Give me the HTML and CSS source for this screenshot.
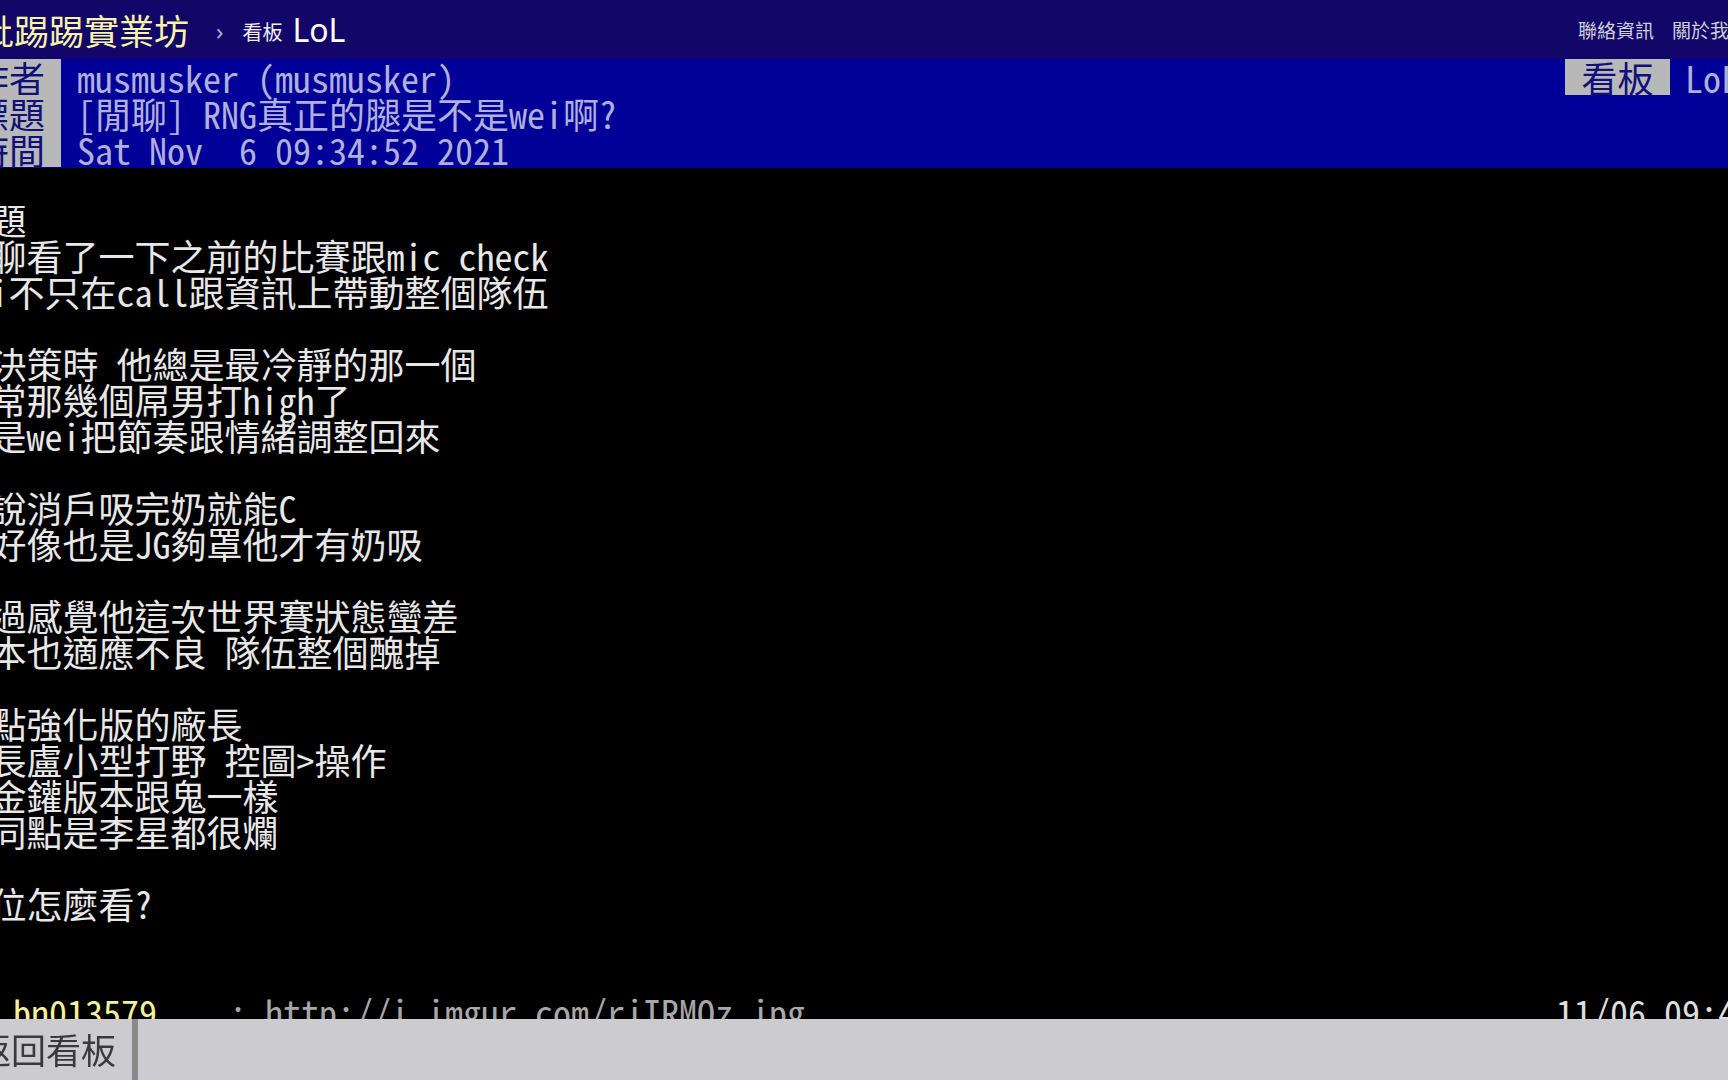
FILE: index.html
```html
<!DOCTYPE html>
<html lang="zh-Hant">
<head>
<meta charset="utf-8">
<title>[閒聊] RNG真正的腿是不是wei啊? - 看板 LoL - 批踢踢實業坊</title>
<link rel="stylesheet" href="styles.css">
</head>
<body>
<div class="topbar">
  <div class="crumbs">
    <span class="logo">批踢踢實業坊</span>
    <span class="sep">›</span>
    <span class="board-label">看板</span>
    <span class="board">LoL</span>
  </div>
  <div class="links">
    <span class="link">聯絡資訊</span>
    <span class="link">關於我們</span>
  </div>
</div>
<div class="main">
  <div class="meta">
    <div class="meta-left">
      <div class="metaline"><span class="tag">作者</span><span class="val">musmusker (musmusker)</span></div>
      <div class="metaline"><span class="tag">標題</span><span class="val">[閒聊] RNG真正的腿是不是wei啊?</span></div>
      <div class="metaline"><span class="tag">時間</span><span class="val">Sat Nov  6 09:34:52 2021</span></div>
    </div>
    <div class="metaline meta-right"><span class="tag tag-right">看板</span><span class="val val-right">LoL</span></div>
  </div>
  <div class="content">如題
無聊看了一下之前的比賽跟mic check
Wei不只在call跟資訊上帶動整個隊伍

在決策時 他總是最冷靜的那一個
平常那幾個屌男打high了
都是wei把節奏跟情緒調整回來

都說消戶吸完奶就能C
但好像也是JG夠罩他才有奶吸

不過感覺他這次世界賽狀態蠻差
版本也適應不良 隊伍整個醜掉

有點強化版的廠長
廠長盧小型打野 控圖>操作
但金鑵版本跟鬼一樣
共同點是李星都很爛

各位怎麼看?</div>
  <div class="spacer"></div>
  <div class="push"><span class="push-tag">推 </span><span class="push-userid">bn013579</span><span class="push-content">: http://i.imgur.com/rjIRMOz.jpg</span><span class="push-time">11/06 09:41</span></div>
</div>
<div class="bottombar">
  <div class="back">返回看板</div>
</div>
</body>
</html>
```

FILE: styles.css
```css
html, body {
  margin: 0;
  padding: 0;
  overflow: hidden;
  background: #000;
  width: 1728px;
  height: 1080px;
}

body {
  font-family: "Noto Sans Mono CJK TC", "Noto Sans CJK TC", "DejaVu Sans Mono", monospace;
  color: #e8e8e8;
}

.topbar {
  height: 59px;
  background: #120668;
  display: flex;
  align-items: center;
  justify-content: space-between;
  font-family: "Noto Sans", "Noto Sans CJK TC", sans-serif;
}

.crumbs {
  display: flex;
  align-items: center;
  margin-left: -21px;
}

.logo {
  font-family: "Noto Sans CJK TC", sans-serif;
  font-size: 35px;
  color: #f8f4a6;
  line-height: 1;
}

.sep {
  font-size: 24px;
  color: #a8a8d0;
  margin-left: 27px;
  line-height: 1;
  margin-top: 2px;
}

.board-label {
  font-family: "Noto Sans CJK TC", sans-serif;
  font-size: 20px;
  color: #eeeeee;
  margin-left: 19px;
  margin-top: 4px;
}

.board {
  font-size: 32px;
  color: #ffffff;
  margin-left: 10px;
  line-height: 1;
}

.links {
  display: flex;
  gap: 18px;
  margin-right: -20px;
}

.link {
  font-family: "Noto Sans CJK TC", sans-serif;
  font-size: 19px;
  color: #cfcfd8;
}

.main {
  font-size: 36px;
  line-height: 36px;
}

.meta {
  background: #000099;
  display: flex;
  justify-content: space-between;
  align-items: flex-start;
  margin-right: -11px;
  padding-bottom: 1px;
}

.metaline {
  display: flex;
  height: 36px;
  white-space: pre;
}

.tag {
  background: #b8b8b8;
  color: #10107a;
  width: 104px;
  margin-left: -43px;
  text-align: center;
}

.val {
  color: #b0b0da;
  margin-left: 16px;
}

.tag-right {
  width: 105px;
  margin-left: 0;
}

.val-right {
  margin-left: 15px;
}

.content {
  white-space: pre;
  margin-left: -45.5px;
  padding-top: 33px;
}

.spacer {
  height: 72px;
}

.push {
  display: flex;
  white-space: pre;
  margin-left: -59px;
  margin-right: -26px;
}

.push-tag {
  min-width: 72px;
  color: #ffffff;
}

.push-userid {
  min-width: 216px;
  color: #f5f19a;
}

.push-content {
  color: #a8a8a8;
}

.push-time {
  margin-left: auto;
  color: #dddddd;
}

.bottombar {
  position: fixed;
  left: 0;
  right: 0;
  bottom: 0;
  height: 61px;
  background: #cccbcf;
  display: flex;
}

.back {
  font-family: "Noto Sans CJK TC", sans-serif;
  font-size: 35px;
  color: #3a3a3a;
  margin-left: -24px;
  padding-right: 16px;
  padding-bottom: 2px;
  border-right: 6px solid #8a8a8a;
  display: flex;
  align-items: center;
}
```
